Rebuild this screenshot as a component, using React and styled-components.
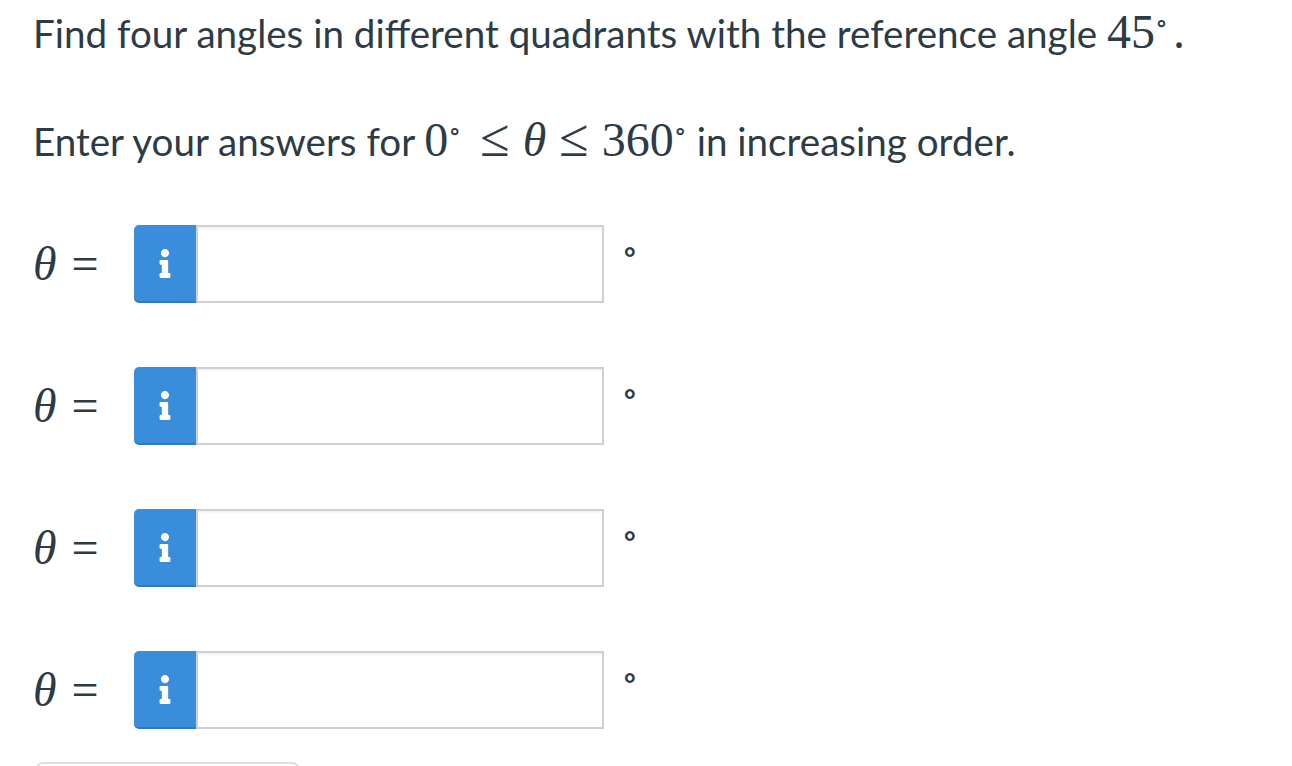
import styled, { createGlobalStyle } from "styled-components";
import { FaInfo } from "react-icons/fa";

const GlobalStyle = createGlobalStyle`
  html, body {
    margin: 0;
    padding: 0;
    background: #ffffff;
  }
  body {
    font-family: Lato, "Open Sans", sans-serif;
    color: #2d3b45;
  }
`;

const Page = styled.div`
  padding: 0 33px;
`;

const Prompt = styled.p`
  margin: 0;
  font-size: 38.6px;
  line-height: 54px;
  white-space: nowrap;
`;

const Title = styled(Prompt)`
  padding-top: 6px;
`;

const Instruction = styled(Prompt)`
  margin-top: 52px;
`;

const Math = styled.span`
  font-family: "Liberation Serif", "DejaVu Serif", serif;
  font-size: 48px;
  line-height: 1;
`;

const Var = styled.i`
  font-family: "Liberation Serif", "DejaVu Serif", serif;
`;

const Sup = styled.sup`
  font-size: 0.55em;
  vertical-align: 0.6em;
  line-height: 0;
  margin-right: ${(p) => p.$after || 0}px;
`;

const Rel = styled.span`
  display: inline-block;
  margin: 0 13px;
  font-size: 1.12em;
  line-height: 1;
`;

const Answers = styled.div`
  display: flex;
  flex-direction: column;
  gap: 64px;
  margin-top: 57px;
`;

const Row = styled.div`
  display: flex;
  align-items: center;
  height: 78px;
`;

const Label = styled.div`
  width: 101px;
  font-family: "Liberation Serif", "DejaVu Serif", serif;
  font-size: 48px;
  line-height: 1;
  white-space: nowrap;
  i {
    margin-right: 15px;
  }
`;

const InputGroup = styled.div`
  display: flex;
  height: 78px;
`;

const InfoButton = styled.button`
  width: 62px;
  height: 78px;
  border: none;
  border-bottom: 2px solid #2f7ac4;
  border-radius: 5px 0 0 5px;
  background: #3a8ddb;
  color: #ffffff;
  display: flex;
  align-items: center;
  justify-content: center;
  padding: 0;
  svg {
    width: 12px;
    height: 29px;
  }
`;

const Field = styled.input`
  box-sizing: border-box;
  width: 408px;
  height: 78px;
  margin: 0;
  border: 2px solid #d0d0d0;
  border-radius: 0;
  box-shadow: inset 0 2px 2px rgba(0, 0, 0, 0.05);
  font-size: 24px;
  padding: 0 12px;
  outline: none;
`;

const Unit = styled.span`
  align-self: flex-start;
  margin: 19px 0 0 20px;
  font-size: 28px;
  font-weight: 700;
  line-height: 26px;
`;

const Submit = styled.div`
  margin: 33px 0 0 2px;
  width: 261px;
  height: 50px;
  border: 2px solid #dedede;
  border-radius: 8px;
`;

export default function App() {
  const rows = [0, 1, 2, 3];
  return (
    <>
      <GlobalStyle />
      <Page>
        <Title>
          Find four angles in different quadrants with the reference angle{" "}
          <Math>
            45<Sup $after={5}>∘</Sup>.
          </Math>
        </Title>
        <Instruction>
          Enter your answers for{" "}
          <Math>
            0<Sup $after={6}>∘</Sup>
            <Rel>≤</Rel>
            <Var>θ</Var>
            <Rel>≤</Rel>
            360<Sup>∘</Sup>
          </Math>{" "}
          in increasing order.
        </Instruction>
        <Answers>
          {rows.map((r) => (
            <Row key={r}>
              <Label>
                <Var>θ</Var>=
              </Label>
              <InputGroup>
                <InfoButton type="button" aria-label="info">
                  <FaInfo />
                </InfoButton>
                <Field type="text" />
              </InputGroup>
              <Unit>°</Unit>
            </Row>
          ))}
        </Answers>
        <Submit />
      </Page>
    </>
  );
}
